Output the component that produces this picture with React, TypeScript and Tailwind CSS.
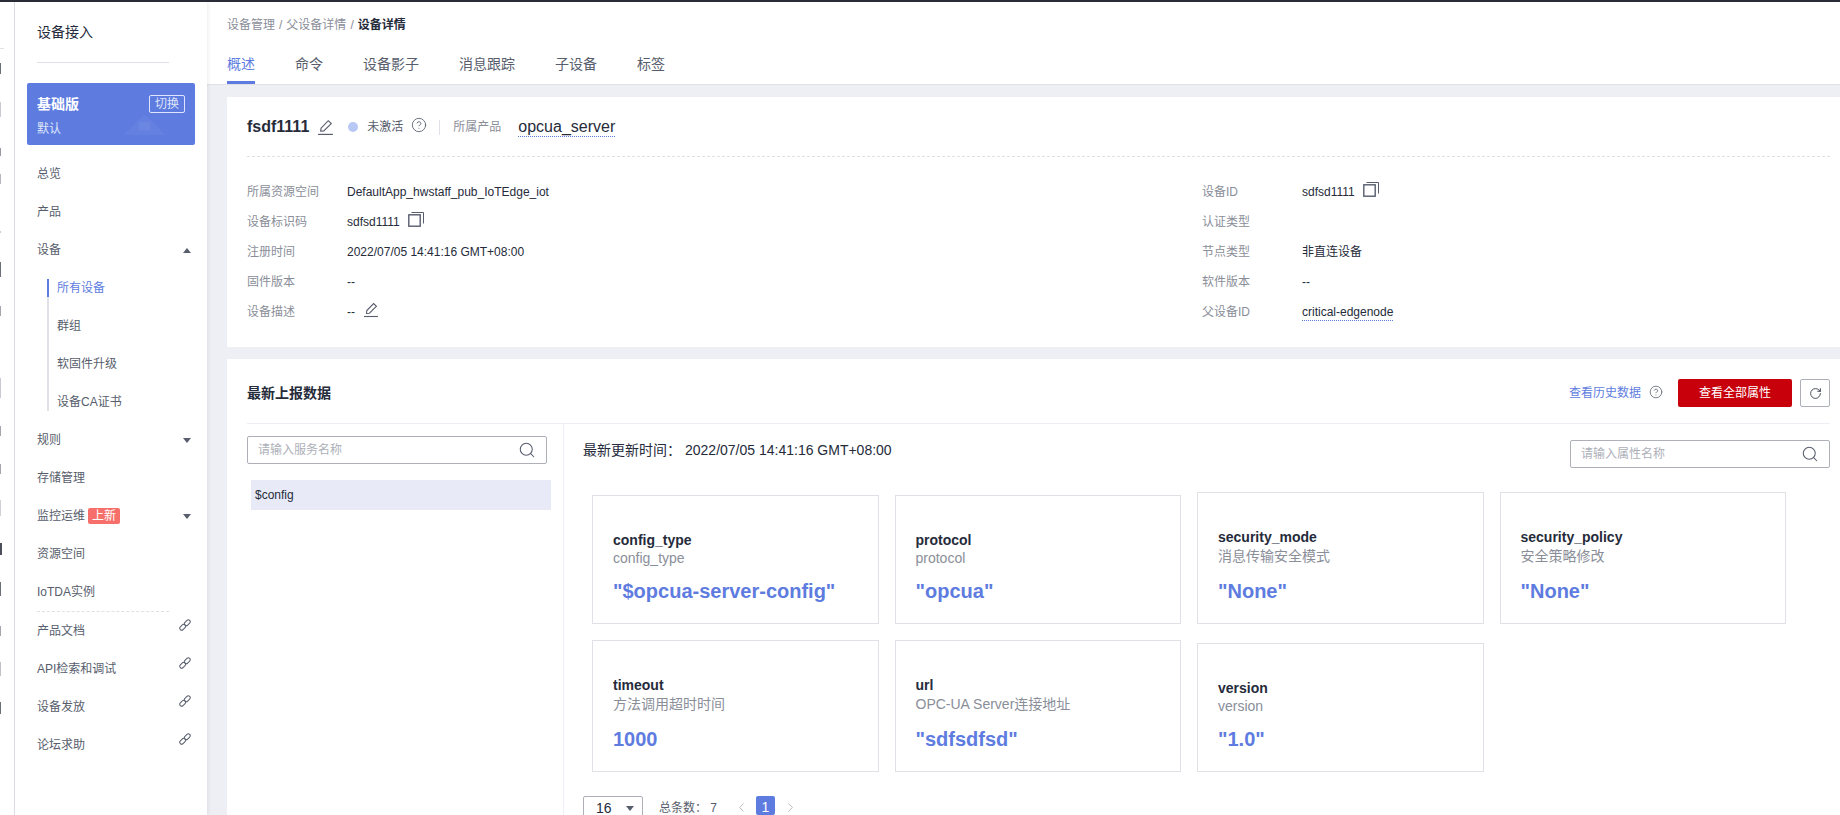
import React from "react";
import { ChevronLeft, ChevronRight, CircleHelp, RotateCw, Search } from "lucide-react";

const railMarks = [
  "mt-[46px] h-px w-1 bg-[#dfe1e6]",
  "mt-[14px] h-[11px] w-px bg-[#6b6f7a]",
  "mt-[28px] h-[15px] w-px bg-[#c9cbd2]",
  "mt-[31px] h-2 w-px bg-[#9a9ca5]",
  "mt-[18px] h-[10px] w-px bg-[#b5b7bf]",
  "mt-[47px] h-[2px] w-px bg-[#c9cbd2]",
  "mt-[29px] h-[15px] w-px bg-[#6b6f7a]",
  "mt-[29px] h-[10px] w-px bg-[#a5a7af]",
  "mt-[62px] h-5 w-px bg-[#c9cbd2]",
  "mt-[28px] h-[10px] w-[1px] bg-[#a5a7af]",
  "mt-[28px] h-[10px] w-px bg-[#a5a7af]",
  "mt-[26px] h-4 w-px bg-[#d0d2d8]",
  "mt-[27px] h-3 w-[2px] bg-[#4b4f5a]",
  "mt-[27px] h-[14px] w-px bg-[#6b6f7a]",
  "mt-[30px] h-[10px] w-px bg-[#a5a7af]",
  "mt-[26px] h-[14px] w-px bg-[#c0c2ca]",
  "mt-[26px] h-3 w-[1px] bg-[#6b6f7a]",
];

const details = [
  { label: "所属资源空间", value: "DefaultApp_hwstaff_pub_IoTEdge_iot" },
  { label: "设备标识码", value: "sdfsd1111", copy: true },
  { label: "注册时间", value: "2022/07/05 14:41:16 GMT+08:00" },
  { label: "固件版本", value: "--" },
  { label: "设备描述", value: "--", edit: true },
];

const detailsRight = [
  { label: "设备ID", value: "sdfsd1111", copy: true },
  { label: "认证类型", value: "" },
  { label: "节点类型", value: "非直连设备" },
  { label: "软件版本", value: "--" },
  { label: "父设备ID", value: "critical-edgenode", link: true },
];

const props = [
  { name: "config_type", sub: "config_type", value: '"$opcua-server-config"' },
  { name: "protocol", sub: "protocol", value: '"opcua"' },
  { name: "security_mode", sub: "消息传输安全模式", value: '"None"', cjk: true },
  { name: "security_policy", sub: "安全策略修改", value: '"None"', cjk: true },
  { name: "timeout", sub: "方法调用超时时间", value: "1000", cjk: true },
  { name: "url", sub: "OPC-UA Server连接地址", value: '"sdfsdfsd"', cjk: true },
  { name: "version", sub: "version", value: '"1.0"' },
];

function PencilIcon({ className }: { className?: string }) {
  return (
    <svg viewBox="0 0 16 16" fill="none" stroke="#575d6c" strokeWidth="1.1" className={className}>
      <path d="M3.5 11.5 L3.8 8.6 L10.6 1.6 L13.4 4.3 L6.4 11.2 Z" />
      <path d="M1 14.5 H15" />
    </svg>
  );
}

function CopyIcon() {
  return (
    <svg viewBox="0 0 16 16" fill="none" stroke="#575d6c" className="w-4 h-4 ml-2 -mt-[6px]">
      <rect x="0.8" y="3.8" width="11.4" height="11.4" strokeWidth="1.4" />
      <path d="M3.5 1.5 H15.5 V12.5" strokeWidth="1" />
    </svg>
  );
}

function LinkIcon() {
  return (
    <svg viewBox="0 0 12 12" fill="none" stroke="#575d6c" strokeWidth="1" className="w-3 h-3 -mt-3">
      <rect x="0.4" y="6.3" width="6.6" height="3.8" rx="1.9" transform="rotate(-45 3.7 8.2)" />
      <rect x="5" y="1.9" width="6.6" height="3.8" rx="1.9" transform="rotate(-45 8.3 3.8)" />
    </svg>
  );
}

function Caret({ up, className }: { up?: boolean; className?: string }) {
  return (
    <svg viewBox="0 0 8 5" className={`w-2 h-[5px] ${className ?? ""}`} fill="#575d6c">
      <polygon points={up ? "4,0 8,5 0,5" : "0,0 8,0 4,5"} />
    </svg>
  );
}

function DottedTriangle() {
  const dots: React.ReactNode[] = [];
  for (let y = 0; y < 20; y++) {
    const half = y + 1;
    for (let x = 20 - half; x <= 20 + half; x++) {
      const center = Math.abs(x - 20) < 6 && y > 6 && y < 15;
      dots.push(
        <rect key={`${x}-${y}`} x={x * 2} y={y * 2} width="1" height="1" fill="#fff" opacity={center ? 0.35 : 0.16} />
      );
    }
  }
  return (
    <svg viewBox="0 0 82 40" className="absolute left-[97px] bottom-0 w-[41px] h-10 overflow-hidden">
      {dots}
    </svg>
  );
}

function MenuItem({ text, right, badge }: { text: string; right?: React.ReactNode; badge?: boolean }) {
  return (
    <div className="flex items-center justify-between h-[38px] pl-[22px] pr-4 text-xs text-[#575d6c]">
      <span className="flex items-center">
        {text}
        {badge && (
          <span className="ml-[3px] w-8 h-4 rounded-[2px] bg-[#f66f6a] text-white text-center leading-4">上新</span>
        )}
      </span>
      {right}
    </div>
  );
}

function Sidebar() {
  return (
    <aside className="w-48 h-full shrink-0 bg-white shadow-[1px_0_4px_rgba(0,0,0,0.08)] z-10">
      <div className="pl-[22px] pt-5 text-sm leading-5 text-[#252b3a]">设备接入</div>
      <div className="ml-[22px] mt-5 w-[132px] h-px bg-[#dfe1e6]" />
      <div className="relative ml-3 mt-5 w-[168px] h-[62px] rounded-[2px] bg-[#5e7ce0] overflow-hidden">
        <DottedTriangle />
        <div className="flex items-center justify-between pl-[10px] pr-[10px] pt-[11px]">
          <span className="text-sm font-bold leading-5 text-white">基础版</span>
          <span className="w-9 h-[18px] border border-[#dfe5fa] rounded-[2px] text-xs leading-4 text-center text-[#dfe5fa]">切换</span>
        </div>
        <div className="pl-[10px] mt-[5px] text-xs leading-5 text-[#dfe5fa]">默认</div>
      </div>
      <div className="mt-[10px]">
        <MenuItem text="总览" />
        <MenuItem text="产品" />
        <MenuItem text="设备" right={<Caret up />} />
        <div className="py-[10px] pl-8">
          <div className="flex flex-col gap-5 border-l-2 border-[#dfe1e6] text-xs leading-[18px] text-[#575d6c]">
            <div className="-ml-[2px] pl-2 border-l-2 border-[#5e7ce0] text-[#5e7ce0]">所有设备</div>
            <div className="pl-2">群组</div>
            <div className="pl-2">软固件升级</div>
            <div className="pl-2">设备CA证书</div>
          </div>
        </div>
        <MenuItem text="规则" right={<Caret />} />
        <MenuItem text="存储管理" />
        <MenuItem text="监控运维" badge right={<Caret />} />
        <MenuItem text="资源空间" />
        <MenuItem text="IoTDA实例" />
        <div className="ml-[22px] w-[132px] border-t border-dashed border-[#dfe1e6]" />
        <MenuItem text="产品文档" right={<LinkIcon />} />
        <MenuItem text="API检索和调试" right={<LinkIcon />} />
        <MenuItem text="设备发放" right={<LinkIcon />} />
        <MenuItem text="论坛求助" right={<LinkIcon />} />
      </div>
    </aside>
  );
}

function Detail({ row }: { row: { label: string; value: string; copy?: boolean; edit?: boolean; link?: boolean } }) {
  return (
    <div className="flex items-center h-[30px] text-xs">
      <span className="w-[100px] text-[#8a8e99]">{row.label}</span>
      <span className={row.link ? "text-[#252b3a] border-b border-dotted border-[#5e7ce0] leading-[16px] mt-[1px]" : "text-[#252b3a]"}>
        {row.value}
      </span>
      {row.copy && <CopyIcon />}
      {row.edit && <PencilIcon className="w-4 h-4 ml-2 -mt-1" />}
    </div>
  );
}

function PropCard({ p }: { p: (typeof props)[number] }) {
  return (
    <div className="border border-[#dfe1e6] pl-5 pt-[35px] pb-[18px]">
      <div className="text-sm font-bold leading-[18px] text-[#252b3a]">{p.name}</div>
      <div className={`text-sm text-[#8a8e99] ${p.cjk ? "leading-[21px]" : "leading-[18px]"}`}>{p.sub}</div>
      <div className="mt-[10px] text-xl font-bold leading-[28px] text-[#5e7ce0]">{p.value}</div>
    </div>
  );
}

function SearchBox({ text, className }: { text: string; className: string }) {
  return (
    <div className={`flex items-center justify-between h-7 border border-[#adb0b8] rounded-[2px] pl-[10px] pr-[10px] ${className}`}>
      <span className="text-xs text-[#adb0b8]">{text}</span>
      <Search size={18} strokeWidth={1.4} className="text-[#575d6c]" />
    </div>
  );
}

export default function App() {
  return (
    <div className="w-[1840px] h-[815px] overflow-hidden flex flex-col bg-[#eeeff4] text-[#252b3a] font-['Liberation_Sans','Noto_Sans_CJK_SC',sans-serif]">
      <div className="h-[2px] shrink-0 bg-[#2a2c38]" />
      <div className="flex flex-1 min-h-0">
        <div className="w-[15px] h-full shrink-0 flex flex-col bg-white border-r border-[#dfe1e6]">
          {railMarks.map((m) => (
            <div key={m} className={m} />
          ))}
        </div>
        <Sidebar />
        <main className="flex-1 min-w-0 flex flex-col">
          <header className="h-[83px] shrink-0 bg-white border-b border-[#dfe1e6] pl-5">
            <div className="pt-[14px] text-xs leading-[18px] text-[#8a8e99]">
              设备管理<span className="mx-1">/</span>父设备详情<span className="mx-1">/</span>
              <span className="font-bold text-[#252b3a]">设备详情</span>
            </div>
            <nav className="flex gap-10 mt-4 text-sm text-[#575d6c]">
              <span className="h-[34px] leading-7 border-b-[3px] border-[#5e7ce0] text-[#5e7ce0]">概述</span>
              <span className="leading-7">命令</span>
              <span className="leading-7">设备影子</span>
              <span className="leading-7">消息跟踪</span>
              <span className="leading-7">子设备</span>
              <span className="leading-7">标签</span>
            </nav>
          </header>

          <section className="mt-3 ml-5 h-[250px] shrink-0 bg-white px-5 pt-5">
            <div className="flex items-center h-5">
              <span className="text-base font-bold">fsdf1111</span>
              <PencilIcon className="w-[17px] h-[17px] ml-2" />
              <span className="ml-[14px] w-[10px] h-[10px] rounded-full bg-[#b8c8f5]" />
              <span className="ml-[9px] text-xs text-[#575d6c]">未激活</span>
              <CircleHelp size={16} strokeWidth={1.3} className="ml-2 -mt-1 text-[#575d6c]" />
              <span className="ml-3 w-px h-[15px] bg-[#dfe1e6]" />
              <span className="ml-[13px] text-xs text-[#8a8e99]">所属产品</span>
              <span className="ml-[17px] text-base leading-[18px] border-b border-dotted border-[#5e7ce0] text-[#252b3a]">opcua_server</span>
            </div>
            <div className="mt-[19px] mr-[-10px] border-t border-dashed border-[#dfe1e6]" />
            <div className="mt-5 flex">
              <div className="w-[955px]">
                {details.map((r) => (
                  <Detail key={r.label} row={r} />
                ))}
              </div>
              <div>
                {detailsRight.map((r) => (
                  <Detail key={r.label} row={r} />
                ))}
              </div>
            </div>
          </section>

          <section className="mt-3 ml-5 flex-1 min-h-0 bg-white pl-5 pr-[10px]">
            <div className="flex items-center justify-between h-[65px] pt-1 border-b border-[#eeeff4]">
              <span className="text-sm font-bold text-[#252b3a]">最新上报数据</span>
              <div className="flex items-center">
                <span className="text-xs text-[#5e7ce0]">查看历史数据</span>
                <CircleHelp size={14} strokeWidth={1.3} className="ml-2 -mt-[2px] text-[#575d6c]" />
                <span className="ml-[15px] w-[114px] h-7 rounded-[2px] bg-[#c7000b] text-xs leading-7 text-center text-white">查看全部属性</span>
                <span className="ml-2 w-[30px] h-7 border border-[#adb0b8] rounded-[2px] flex items-center justify-center">
                  <RotateCw size={13} strokeWidth={1.5} className="text-[#252b3a]" />
                </span>
              </div>
            </div>
            <div className="flex">
              <div className="w-[317px] h-[400px] shrink-0 border-r border-[#eeeff4] pt-3">
                <SearchBox text="请输入服务名称" className="w-[300px]" />
                <div className="ml-1 mt-4 w-[300px] h-[30px] pl-1 bg-[#e8ebf7] text-xs leading-[30px] text-[#252b3a]">$config</div>
              </div>
              <div className="flex-1 pt-4 pl-[19px]">
                <div className="flex items-start justify-between">
                  <div className="text-sm leading-5">
                    最新更新时间：<span className="ml-1">2022/07/05 14:41:16 GMT+08:00</span>
                  </div>
                  <SearchBox text="请输入属性名称" className="w-[260px]" />
                </div>
                <div className="mt-6 ml-[9px] grid grid-cols-[repeat(4,286.5px)] auto-rows-[132px] gap-x-4 gap-y-4 items-end">
                  {props.map((p) => (
                    <PropCard key={p.name} p={p} />
                  ))}
                </div>
                <div className="mt-6 flex items-start text-xs text-[#575d6c]">
                  <span className="w-[60px] h-7 border border-[#adb0b8] rounded-[2px] flex items-start justify-between pl-3 pr-2 pt-px text-sm leading-5 text-[#252b3a]">
                    16
                    <Caret className="mt-[8px]" />
                  </span>
                  <span className="ml-4 leading-6">总条数： 7</span>
                  <ChevronLeft size={15} strokeWidth={1.4} className="ml-[17px] mt-[4px] text-[#adb0b8]" />
                  <span className="ml-[7px] w-[19px] h-[19px] rounded-[2px] bg-[#5e7ce0] text-center text-sm leading-[22px] text-white">1</span>
                  <ChevronRight size={15} strokeWidth={1.4} className="ml-2 mt-[4px] text-[#adb0b8]" />
                </div>
              </div>
            </div>
          </section>
        </main>
      </div>
    </div>
  );
}
